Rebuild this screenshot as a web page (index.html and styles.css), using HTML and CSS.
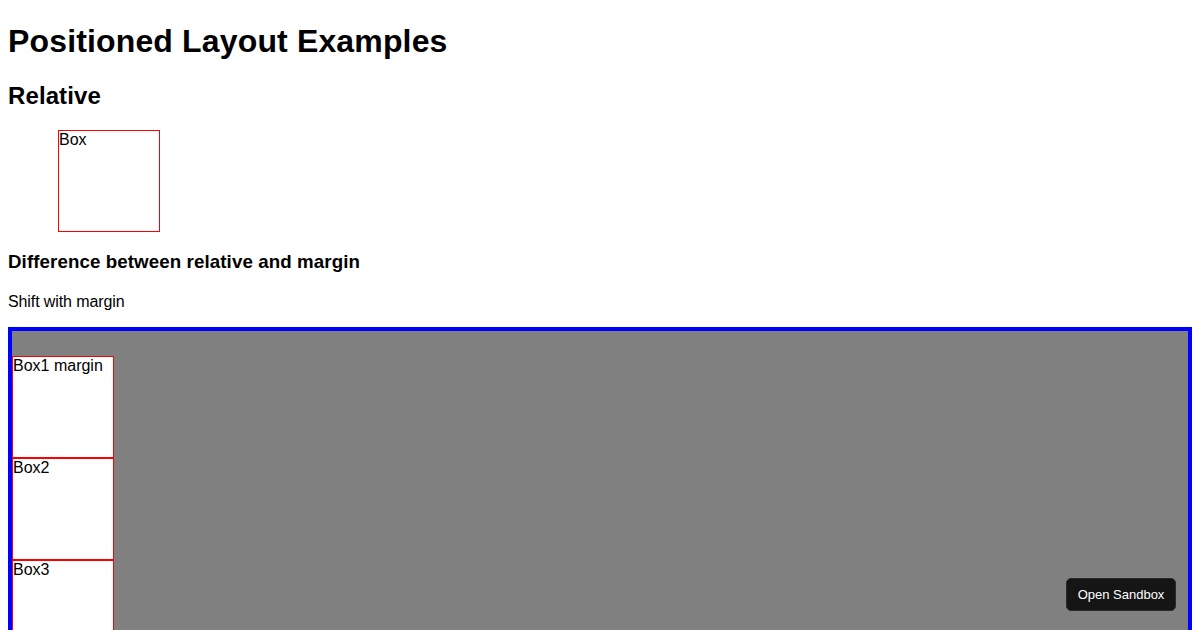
FILE: index.html
```html
<!DOCTYPE html>
<html>
<head>
<meta charset="utf-8">
<link rel="stylesheet" href="styles.css">
</head>
<body>
<h1 class="title">Positioned Layout Examples</h1>
<h2 class="section">Relative</h2>
<div class="box shifted">Box</div>
<h3 class="sub">Difference between relative and margin</h3>
<p class="text">Shift with margin</p>
<div class="stage">
  <div class="box first">Box1 margin</div>
  <div class="box">Box2</div>
  <div class="box">Box3</div>
</div>
<button class="sandbox">Open Sandbox</button>
</body>
</html>
```
FILE: styles.css
```css
body {
  margin: 8px;
  font-family: "Liberation Sans", Arial, sans-serif;
  font-size: 16px;
  color: #000;
  background: #fff;
}
.title {
  font-size: 32px;
  letter-spacing: 0.15px;
  margin: 15.44px 0 21.44px;
}
.section {
  font-size: 24px;
  letter-spacing: 0.1px;
  margin: 19.92px 0;
}
.sub {
  font-size: 18.72px;
  letter-spacing: 0.1px;
  margin: 18.72px 0 20.72px;
}
.text {
  letter-spacing: -0.1px;
  margin: 16px 0;
}
.box {
  width: 100px;
  height: 100px;
  border: 1px solid red;
  background: #fff;
}
.shifted {
  margin-left: 50px;
  margin-top: 20px;
  margin-bottom: 2px;
}
.stage {
  border: 4px solid blue;
  background: #808080;
  padding-top: 25px;
  height: 400px;
}
.sandbox {
  position: fixed;
  right: 24px;
  bottom: 19px;
  width: 110px;
  height: 33px;
  background: #151515;
  color: #fff;
  border: 1px solid #2a2a2a;
  border-radius: 5px;
  font-family: "Liberation Sans", Arial, sans-serif;
  font-size: 13px;
  padding: 0;
}
```
